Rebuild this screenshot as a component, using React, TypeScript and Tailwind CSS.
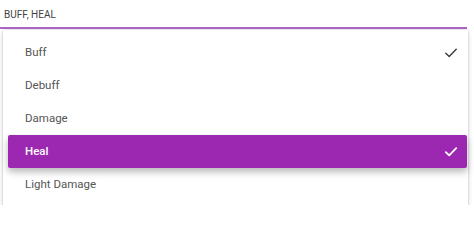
import React from "react";

const items = ["Buff", "Debuff", "Damage", "Heal", "Light Damage"];
const selected = new Set(["Buff", "Heal"]);

function Check({ white }: { white?: boolean }) {
  return (
    <svg width="12" height="10" viewBox="0 0 12 10" className="block">
      <path
        d="M0.8 5.2 L4.2 8.4 L11.2 1.2"
        fill="none"
        stroke={white ? "#ffffff" : "#3a3a3a"}
        strokeWidth={white ? 1.8 : 1.4}
        strokeLinecap="round"
        strokeLinejoin="round"
      />
    </svg>
  );
}

export default function App() {
  return (
    <div className="w-[474px] h-[205px] overflow-hidden bg-white font-['Roboto',sans-serif]">
      <div className="mr-[7px] h-[29px] border-b-2 border-[#ac66c5] pl-[4px] pt-[9px] text-[10px] leading-[12px] text-[#3f3f3f]">
        BUFF, HEAL
      </div>
      <div className="ml-[3px] mr-[6px] mt-[1px] h-[240px] bg-white pt-[6px] shadow-[0_2px_5px_rgba(0,0,0,0.18),0_0_1px_rgba(0,0,0,0.35)]">
        {items.map((it) =>
          it === "Heal" ? (
            <div
              key={it}
              className="ml-[5px] mr-[1px] flex h-[33px] items-center justify-between rounded-[2px] bg-[#9c27b0] pl-[17px] pr-[10px] text-[11.5px] font-medium text-white shadow-[0_4px_7px_rgba(0,0,0,0.28)]"
            >
              <span>{it}</span>
              <Check white />
            </div>
          ) : (
            <div
              key={it}
              className="flex h-[33px] items-center justify-between pl-[22px] pr-[11px] text-[11.5px] text-[#555555]"
            >
              <span>{it}</span>
              {selected.has(it) ? <Check /> : null}
            </div>
          )
        )}
      </div>
    </div>
  );
}
